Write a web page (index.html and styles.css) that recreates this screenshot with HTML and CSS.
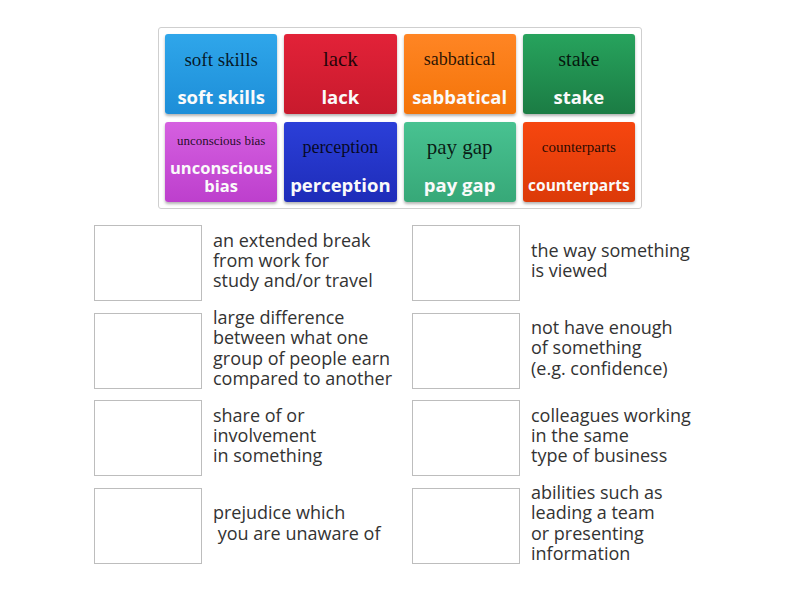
FILE: index.html
```html
<!DOCTYPE html>
<html lang="en">
<head>
    <meta charset="UTF-8">
    <title>Match up</title>
    <link rel="stylesheet" href="styles.css">
</head>
<body>
    <div class="tray">
        <div class="tile blue">
            <div class="tile-top t19">soft skills</div>
            <div class="tile-word">soft skills</div>
        </div>
        <div class="tile red">
            <div class="tile-top t21">lack</div>
            <div class="tile-word">lack</div>
        </div>
        <div class="tile orange">
            <div class="tile-top t18">sabbatical</div>
            <div class="tile-word">sabbatical</div>
        </div>
        <div class="tile green">
            <div class="tile-top t20">stake</div>
            <div class="tile-word">stake</div>
        </div>
        <div class="tile magenta">
            <div class="tile-top t13">unconscious bias</div>
            <div class="tile-word small">unconscious bias</div>
        </div>
        <div class="tile navy">
            <div class="tile-top t18">perception</div>
            <div class="tile-word">perception</div>
        </div>
        <div class="tile teal">
            <div class="tile-top t21">pay gap</div>
            <div class="tile-word">pay gap</div>
        </div>
        <div class="tile scarlet">
            <div class="tile-top t15">counterparts</div>
            <div class="tile-word tiny">counterparts</div>
        </div>
    </div>

    <div class="targets">
        <div class="target">
            <div class="slot"></div>
            <p>an extended break<br>from work for<br>study and/or travel</p>
        </div>
        <div class="target">
            <div class="slot"></div>
            <p>the way something<br>is viewed</p>
        </div>
        <div class="target">
            <div class="slot"></div>
            <p>large difference<br>between what one<br>group of people earn<br>compared to another</p>
        </div>
        <div class="target">
            <div class="slot"></div>
            <p>not have enough<br>of something<br>(e.g. confidence)</p>
        </div>
        <div class="target">
            <div class="slot"></div>
            <p>share of or<br>involvement<br>in something</p>
        </div>
        <div class="target">
            <div class="slot"></div>
            <p>colleagues working<br>in the same<br>type of business</p>
        </div>
        <div class="target">
            <div class="slot"></div>
            <p>prejudice which<br>&nbsp;you are unaware of</p>
        </div>
        <div class="target">
            <div class="slot"></div>
            <p>abilities such as<br>leading a team<br>or presenting<br>information</p>
        </div>
    </div>
</body>
</html>
```

FILE: styles.css
```css
body {
    margin: 0;
    background-color: white;
    font-family: "Open Sans", Arial, sans-serif;
}
.tray {
    width: 470px;
    margin: 27px auto 0;
    padding: 6px;
    border: 1px solid #cfcfcf;
    border-radius: 3px;
    display: grid;
    grid-template-columns: repeat(4, 1fr);
    column-gap: 7px;
    row-gap: 8px;
}
.tile {
    height: 80px;
    padding-bottom: 5px;
    box-sizing: border-box;
    border-radius: 3px;
    box-shadow: 0 2px 3px rgba(0, 0, 0, 0.3);
    display: flex;
    flex-direction: column;
    text-align: center;
}
.tile-top {
    flex: 1;
    display: flex;
    align-items: center;
    justify-content: center;
    font-family: "Liberation Serif", "Times New Roman", serif;
    color: rgba(0, 0, 0, 0.85);
}
.t13 { font-size: 13px; }
.t15 { font-size: 15px; }
.t18 { font-size: 18px; }
.t19 { font-size: 19px; }
.t20 { font-size: 20px; }
.t21 { font-size: 21px; }
.tile-word {
    color: #fafafa;
    font-weight: bold;
    font-size: 18.5px;
    line-height: 24px;
}
.tile-word.small {
    font-size: 16.5px;
    line-height: 18px;
    padding-bottom: 2px;
}
.tile-word.tiny {
    font-size: 15.5px;
}
.blue { background: linear-gradient(#2fa6ea, #1d8ed8); }
.red { background: linear-gradient(#e22238, #c81a2d); }
.orange { background: linear-gradient(#ff8524, #f47408); }
.green { background: linear-gradient(#27a35d, #1b7c44); }
.magenta { background: linear-gradient(#d560e0, #bd3fcd); }
.navy { background: linear-gradient(#2b3fd8, #1e2cb9); }
.teal { background: linear-gradient(#48c291, #37a878); }
.scarlet { background: linear-gradient(#f6460f, #dc3a08); }

.targets {
    margin: 16px 0 0 94px;
    display: grid;
    grid-template-columns: 318px 318px;
    row-gap: 11.5px;
}
.target {
    display: flex;
    align-items: center;
    height: 76px;
}
.slot {
    width: 108px;
    height: 76px;
    box-sizing: border-box;
    border: 1px solid #bdbdbd;
    background-color: white;
    flex-shrink: 0;
}
.target p {
    margin: 0 0 6px 11px;
    font-size: 18px;
    line-height: 20.3px;
    color: #333;
}
```
